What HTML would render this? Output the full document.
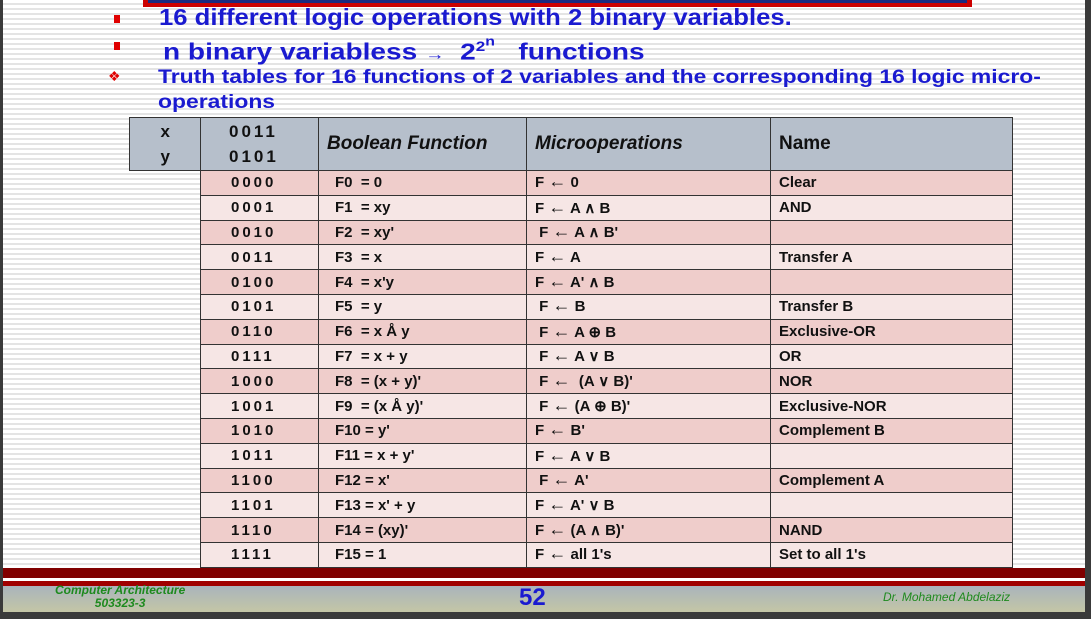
<!DOCTYPE html>
<html><head><meta charset="utf-8"><style>
*{margin:0;padding:0;box-sizing:border-box}
body{width:1091px;height:619px;overflow:hidden;background:#3a3a3a;position:relative;font-family:"Liberation Sans",Arial,sans-serif}
#slide{position:absolute;left:3px;top:0;width:1082px;height:612px;background:repeating-linear-gradient(to bottom,#ffffff 0,#ffffff 3px,#e4e4e4 3px,#e4e4e4 5px)}
.t{position:absolute;color:#1a1ad0;font-weight:bold;white-space:nowrap;transform-origin:0 0}
.b{position:absolute;width:6px;height:8px;background:#e00000}
table{position:absolute;border-collapse:collapse;font-weight:bold;color:#111}
td{border:1.5px solid #333;padding:0 0 0 8px;font-size:15px;height:24.8px;white-space:nowrap}
.ar{font-size:18px;line-height:14px}
</style></head><body>
<div id="slide">
<div style="position:absolute;left:140px;top:0;width:829px;height:7px;background:#cc0000"></div>
<div style="position:absolute;left:145px;top:0;width:819px;height:3px;background:#1a2a80"></div>
<div class="b" style="left:111px;top:15px"></div>
<div class="b" style="left:111px;top:42px"></div>
<div style="position:absolute;left:105px;top:68px;color:#e00000;font-size:14px">❖</div>
<div class="t" style="left:156px;top:4px;font-size:23px;transform:scaleX(1.115)">16 different logic operations with 2 binary variables.</div>
<div class="t" style="left:160px;top:33px;font-size:23px;transform:scaleX(1.22)">n binary variabless <span style="font-weight:normal;font-size:16px">→</span> &nbsp;2<sup style="font-size:14px">2<sup style="font-size:13px">n</sup></sup>&nbsp;&nbsp; functions</div>
<div class="t" style="left:155px;top:65px;font-size:19px;line-height:25px;transform:scaleX(1.205)">Truth tables for 16 functions of 2 variables and the corresponding 16 logic micro-<br>operations</div>
</div>
<table style="left:129px;top:117px;width:884px">
<tr style="background:#b6bfcb;height:53px"><td style="width:71px;text-align:right;padding-right:30px;font-size:17px;line-height:25px;border-right:1.5px solid #333">x<br>y</td><td style="width:118px;font-size:17px;letter-spacing:3px;line-height:25px;padding-left:28px">0011<br>0101</td><td style="width:208px;font-size:19px;font-style:italic">Boolean Function</td><td style="width:244px;font-size:19px;font-style:italic">Microoperations</td><td style="font-size:19px">Name</td></tr>
</table>
<table id="body" style="left:200px;top:170px;width:813px">
<tbody>
</tbody></table>
<script>
var A='<span class="ar">←</span>';
var r=[["0000","F0 &nbsp;= 0","F "+A+" 0","Clear"],["0001","F1 &nbsp;= xy","F "+A+" A ∧ B","AND"],["0010","F2 &nbsp;= xy'","&nbsp;F "+A+" A ∧ B'",""],["0011","F3 &nbsp;= x","F "+A+" A","Transfer A"],["0100","F4 &nbsp;= x'y","F "+A+" A' ∧ B",""],["0101","F5 &nbsp;= y","&nbsp;F "+A+" B","Transfer B"],["0110","F6 &nbsp;= x Å y","&nbsp;F "+A+" A ⊕ B","Exclusive-OR"],["0111","F7 &nbsp;= x + y","&nbsp;F "+A+" A ∨ B","OR"],["1000","F8 &nbsp;= (x + y)'","&nbsp;F "+A+" &nbsp;(A ∨ B)'","NOR"],["1001","F9 &nbsp;= (x Å y)'","&nbsp;F "+A+" (A ⊕ B)'","Exclusive-NOR"],["1010","F10 = y'","F "+A+" B'","Complement B"],["1011","F11 = x + y'","F "+A+" A ∨ B",""],["1100","F12 = x'","&nbsp;F "+A+" A'","Complement A"],["1101","F13 = x' + y","F "+A+" A' ∨ B",""],["1110","F14 = (xy)'","F "+A+" (A ∧ B)'","NAND"],["1111","F15 = 1","F "+A+" all 1's","Set to all 1's"]];
var h="";r.forEach(function(a,i){h+='<tr style="background:'+(i%2?'#f6e6e5':'#efcdcb')+'"><td style="width:118px;letter-spacing:3px;padding-left:30px">'+a[0]+'</td><td style="width:208px;padding-left:16px">'+a[1]+'</td><td style="width:244px">'+a[2]+'</td><td>'+a[3]+'</td></tr>'});
document.querySelector('#body tbody').innerHTML=h;
</script>
<div style="position:absolute;left:3px;top:568px;width:1082px;height:10px;background:#800000"></div>
<div style="position:absolute;left:3px;top:578px;width:1082px;height:3px;background:#fff"></div>
<div style="position:absolute;left:3px;top:581px;width:1082px;height:5px;background:#a00000"></div>
<div style="position:absolute;left:3px;top:586px;width:1082px;height:26px;background:linear-gradient(#a9b4bc,#c4c6a6)"></div>
<div style="position:absolute;left:55px;top:584px;color:#1e8a1e;font-style:italic;font-weight:bold;font-size:12px;text-align:center;line-height:13px">Computer Architecture<br>503323-3</div>
<div style="position:absolute;left:519px;top:584px;color:#1a1ad0;font-weight:bold;font-size:24px">52</div>
<div style="position:absolute;left:883px;top:590px;color:#1e8a1e;font-style:italic;font-size:12px">Dr. Mohamed Abdelaziz</div>
</body></html>
